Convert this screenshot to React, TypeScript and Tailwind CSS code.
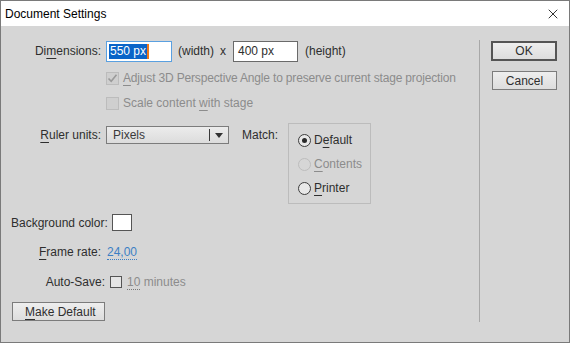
import { X } from 'lucide-react';

function Check({ checked, disabled }: { checked?: boolean; disabled?: boolean }) {
  return (
    <span
      className={`flex h-[13px] w-[13px] items-center justify-center border ${
        disabled ? 'border-[#bcbcbc] bg-[#cfcfcf]' : 'border-[#5a5a5a] bg-[#e4e4e4]'
      }`}
    >
      {checked && (
        <svg width="11" height="11" viewBox="0 0 11 11">
          <path d="M1.5 5.5 L4.2 8.3 L9.5 1.8" fill="none" stroke="#9a9a9a" strokeWidth="1.6" />
        </svg>
      )}
    </span>
  );
}

function Radio({ checked, disabled }: { checked?: boolean; disabled?: boolean }) {
  return (
    <span
      className={`flex h-[13px] w-[13px] items-center justify-center rounded-full border ${
        disabled ? 'border-[#bdbdbd] bg-[#d6d6d6]' : 'border-[#3c3c3c] bg-[#e8e8e8]'
      }`}
    >
      {checked && <span className="h-[5px] w-[5px] rounded-full bg-[#2a2a2a]" />}
    </span>
  );
}

const u = 'underline decoration-1 underline-offset-[3px]';

export default function App() {
  return (
    <div
      className="flex h-[343px] w-[570px] flex-col whitespace-nowrap border border-[#7a7a7a] text-[12px] text-[#2e2e2e]"
      style={{ fontFamily: '"Liberation Sans", Arial, sans-serif' }}
    >
      <div className="flex h-[25px] items-center justify-between bg-white pl-[4px] pr-[8px] text-[12px] text-black">
        <span>Document Settings</span>
        <X className="h-[16px] w-[16px]" strokeWidth={1.2} />
      </div>

      <div className="flex flex-1 bg-[#d6d6d6]">
        <div className="w-[478px] pt-[14px]">
          <div className="flex h-[22px] items-center">
            <span className="w-[100px] text-right">
              Di<span className={u}>m</span>ensions:
            </span>
            <div className="ml-[5px] flex h-[21px] w-[66px] items-center border border-[#5aa0e0] bg-white px-[2px]">
              <span className="bg-[#0a64c8] px-[1px] leading-[15px] text-white">550 px</span>
              <span className="h-[15px] w-[2px] bg-[#f07818]" />
            </div>
            <span className="ml-[6px]">(width)</span>
            <span className="ml-[6px]">x</span>
            <div className="ml-[7px] flex h-[21px] w-[65px] items-center border border-[#6a6a6a] bg-white px-[4px]">
              400 px
            </div>
            <span className="ml-[7px]">(height)</span>
          </div>

          <div className="ml-[105px] mt-[8px] flex h-[16px] items-center gap-[4px] text-[#8c8c8c]">
            <Check checked disabled />
            <span className="tracking-[-0.17px]">
              <span className={u}>A</span>djust 3D Perspective Angle to preserve current stage projection
            </span>
          </div>
          <div className="ml-[105px] mt-[9px] flex h-[16px] items-center gap-[4px] text-[#8c8c8c]">
            <Check disabled />
            <span>
              Scale content <span className={u}>w</span>ith stage
            </span>
          </div>

          <div className="mt-[12px] flex items-start">
            <span className="mt-[3px] w-[100px] text-right leading-[18px]">
              <span className={u}>R</span>uler units:
            </span>
            <div className="ml-[5px] mt-[3px] flex h-[18px] w-[123px] items-center border border-[#7c7c7c] bg-gradient-to-b from-[#ececec] to-[#dcdcdc]">
              <span className="flex-1 pl-[6px] text-[#3a3a3a]">Pixels</span>
              <span className="h-[12px] w-px bg-[#3a3a3a]" />
              <span className="flex w-[18px] justify-center">
                <svg width="8" height="5" viewBox="0 0 8 5">
                  <path d="M0 0 H8 L4 5 Z" fill="#333" />
                </svg>
              </span>
            </div>
            <span className="ml-[13px] mt-[3px] leading-[18px]">Match:</span>
            <div className="ml-[10px] flex h-[81px] w-[83px] flex-col border border-[#bcbcbc] pl-[9px] pt-[9px]">
              <div className="flex h-[14px] items-center gap-[3px]">
                <Radio checked />
                <span>
                  D<span className={u}>e</span>fault
                </span>
              </div>
              <div className="mt-[10px] flex h-[14px] items-center gap-[3px] text-[#8c8c8c]">
                <Radio disabled />
                <span>
                  <span className={u}>C</span>ontents
                </span>
              </div>
              <div className="mt-[10px] flex h-[14px] items-center gap-[3px]">
                <Radio />
                <span>
                  <span className={u}>P</span>rinter
                </span>
              </div>
            </div>
          </div>

          <div className="mt-[10px] flex h-[17px] items-center">
            <span className="ml-[10px]">Background color:</span>
            <span className="ml-[4px] h-[17px] w-[20px] border border-[#555] bg-white" />
          </div>

          <div className="mt-[13px] flex h-[16px] items-center">
            <span className="w-[100px] text-right">
              <span className={u}>F</span>rame rate:
            </span>
            <span className="ml-[6px] border-b border-dotted border-[#3c7fc4] leading-[14px] text-[#3c7fc4]">24,00</span>
          </div>

          <div className="mt-[15px] flex h-[14px] items-center">
            <span className="w-[104px] text-right">Auto-Save:</span>
            <span className="ml-[5px] h-[12px] w-[12px] border border-[#555] bg-[#e6e6e6]" />
            <span className="ml-[5px] text-[#8c8c8c]">
              <span className="border-b border-dotted border-[#777] leading-[13px]">10</span> minutes
            </span>
          </div>

          <button className="ml-[11px] mt-[13px] flex h-[19px] w-[93px] items-center border border-[#7c7c7c] bg-gradient-to-b from-[#eeeeee] to-[#dddddd] pl-[12px] text-[#2e2e2e]">
            <span className={u}>M</span>ake Default
          </button>
        </div>

        <div className="mt-[14px] h-[282px] w-px bg-[#a8a8a8]" />

        <div className="flex flex-col pl-[11px] pt-[15px]">
          <button className="flex h-[20px] w-[66px] items-center justify-center border-2 border-[#555] bg-gradient-to-b from-[#eeeeee] to-[#dddddd]">
            OK
          </button>
          <button className="ml-[1px] mt-[10px] flex h-[19px] w-[65px] items-center justify-center border border-[#7c7c7c] bg-gradient-to-b from-[#eeeeee] to-[#dddddd]">
            Cancel
          </button>
        </div>
      </div>
    </div>
  );
}
